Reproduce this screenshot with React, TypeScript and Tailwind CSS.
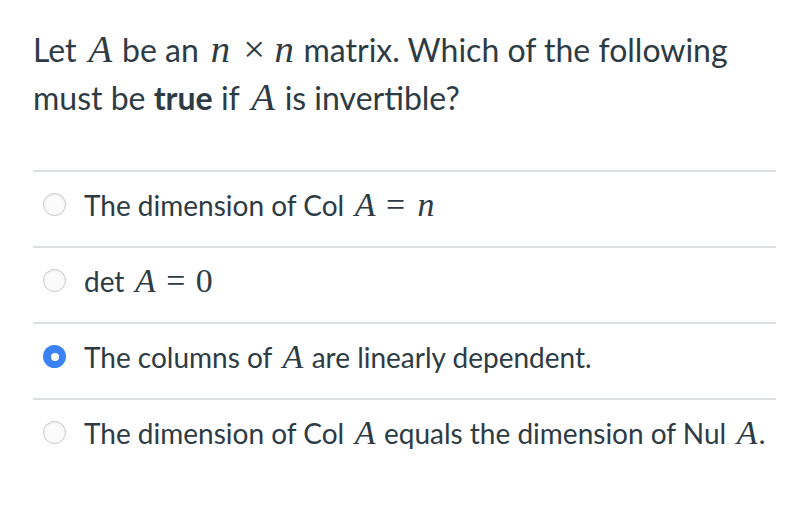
import React from "react";

const V = ({ children }: { children: React.ReactNode }) => (
  <span className="italic text-[1.21em] leading-none ml-[0.1em] mr-[0.04em] [font-family:'Liberation_Serif','DejaVu_Serif',serif]">
    {children}
  </span>
);

const Rel = ({ children }: { children: React.ReactNode }) => (
  <span className="text-[1.21em] leading-none mx-[0.27em] [font-family:'Liberation_Serif','DejaVu_Serif',serif]">
    {children}
  </span>
);

const Times = () => (
  <span className="text-[1.21em] leading-none ml-[0.3em] mr-[0.14em] [font-family:'Liberation_Serif','DejaVu_Serif',serif]">
    ×
  </span>
);

const Radio = ({ checked }: { checked?: boolean }) =>
  checked ? (
    <span className="w-[23px] h-[23px] rounded-full bg-[#3b82f6] flex items-center justify-center shrink-0">
      <span className="w-[8px] h-[8px] rounded-full bg-white" />
    </span>
  ) : (
    <span className="w-[23px] h-[23px] rounded-full border border-[#c4c8cc] bg-[#fbfbfb] shrink-0 shadow-[inset_0_1px_2px_rgba(0,0,0,0.06)]" />
  );

const Option = ({ children, checked }: { children: React.ReactNode; checked?: boolean }) => (
  <div className="h-[76px] border-t-2 border-[#dcdfe1] flex items-center gap-[18px] pl-[10px] pb-[9px]">
    <Radio checked={checked} />
    <div className="text-[28px] leading-none">{children}</div>
  </div>
);

export default function App() {
  return (
    <div className="w-[808px] h-[528px] bg-white text-[#2d3b45] pl-[33px] pr-[32px] pt-[26px] [font-family:Lato,'Open_Sans',sans-serif]">
      <div className="text-[32px] leading-[48px]">
        Let <V>A</V> be an <V>n</V>
        <Times />
        <V>n</V> matrix. Which of the following
        <br />
        must be <b className="font-bold">true</b> if <V>A</V> is invertible?
      </div>
      <div className="mt-[48px]">
        <Option>
          The dimension of Col <V>A</V>
          <Rel>=</Rel>
          <V>n</V>
        </Option>
        <Option>
          det <V>A</V>
          <Rel>=</Rel>
          <span className="text-[1.21em] leading-none ml-[0.04em] [font-family:'Liberation_Serif','DejaVu_Serif',serif]">0</span>
        </Option>
        <Option checked>
          The columns of <V>A</V> are linearly dependent.
        </Option>
        <Option>
          The dimension of Col <V>A</V> equals the dimension of Nul <V>A</V>.
        </Option>
      </div>
    </div>
  );
}
